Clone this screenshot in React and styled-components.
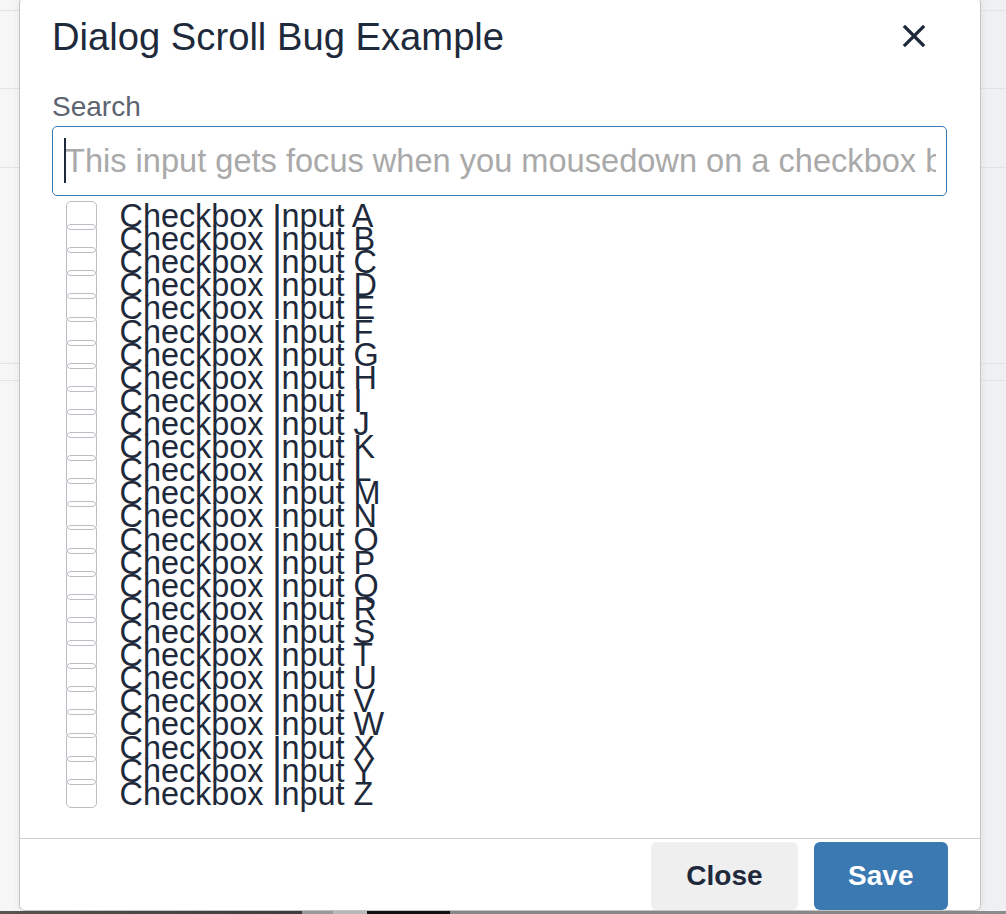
import React from 'react';
import styled, { createGlobalStyle } from 'styled-components';

const GlobalStyle = createGlobalStyle`
  html, body {
    margin: 0;
    padding: 0;
  }
  body {
    font-family: "Liberation Sans", Arial, Helvetica, sans-serif;
    background: #f1f2f4;
  }
  * {
    box-sizing: border-box;
  }
`;

const Page = styled.div`
  position: relative;
  height: 914px;
  overflow: hidden;
  display: flex;
  flex-direction: column;
  background: linear-gradient(90deg, #f6f6f7 0%, #eef0f2 100%);
`;

const BackRow = styled.div`
  height: ${props => props.h}px;
  border-bottom: 1px solid #e1e3e6;
`;

const Filler = styled.div`
  flex: 1;
`;

const BottomStrip = styled.div`
  height: 3px;
  display: flex;
`;

const StripPart = styled.div`
  width: ${props => props.w}px;
  flex: ${props => (props.w ? 'none' : '1')};
  background: ${props => props.bg};
`;

const Dialog = styled.div`
  position: absolute;
  left: 19px;
  top: -3px;
  width: 962px;
  height: 914px;
  display: flex;
  flex-direction: column;
  background: #fff;
  border: 1px solid #c4c4c4;
  border-radius: 6px;
  box-shadow: 0 0 10px rgba(0, 0, 0, 0.07);
`;

const Header = styled.div`
  display: flex;
  justify-content: space-between;
  align-items: flex-start;
  padding: 20px 54px 0 32px;
`;

const Title = styled.h1`
  margin: 0;
  font-size: 38.2px;
  line-height: 38px;
  font-weight: 400;
  color: #1e2a3b;
`;

const CloseIcon = styled.button`
  width: 24px;
  height: 24px;
  margin-top: 6px;
  padding: 0;
  border: none;
  background: transparent;
  color: #1e2a3b;
  cursor: pointer;
  display: flex;
`;

const Body = styled.div`
  flex: 1;
  padding: 0 33px 0 32px;
`;

const Label = styled.label`
  display: block;
  margin: 37px 0 5px;
  font-size: 28px;
  line-height: 28px;
  color: #5b6470;
`;

const InputWrap = styled.div`
  position: relative;
`;

const SearchInput = styled.input`
  display: block;
  width: 100%;
  height: 70px;
  padding: 0 10px 0 12px;
  border: 1.5px solid #3b79b3;
  border-radius: 5px;
  outline: none;
  font-family: inherit;
  font-size: 32.6px;
  color: #1e2a3b;
  background: #fff;

  &::placeholder {
    color: #a9a9a9;
  }
`;

const Caret = styled.span`
  position: absolute;
  left: 12px;
  top: 12px;
  width: 1.5px;
  height: 45px;
  background: #1e2a3b;
`;

const List = styled.div`
  margin-top: 5px;
  padding-left: 14px;
`;

const Row = styled.label`
  display: flex;
  align-items: flex-start;
  height: 23.12px;
  overflow: visible;
`;

const Box = styled.input`
  appearance: none;
  -webkit-appearance: none;
  flex: none;
  width: 31px;
  height: 29px;
  margin: 0;
  border: 1.5px solid #babec4;
  border-radius: 5px;
  background: transparent;
`;

const RowText = styled.span`
  margin-left: 22.5px;
  font-size: 32.4px;
  line-height: 30.4px;
  color: #1e2a3b;
  white-space: nowrap;
`;

const Footer = styled.div`
  display: flex;
  justify-content: flex-end;
  gap: 16px;
  padding: 3px 32px 0 0;
  border-top: 1.5px solid #d0d0d0;
`;

const Button = styled.button`
  height: 68px;
  padding: 0 ${props => (props.primary ? '34.5px' : '35px')};
  border: none;
  border-radius: 6px;
  font-family: inherit;
  font-size: 28px;
  font-weight: 700;
  background: ${props => (props.primary ? '#3b79b3' : '#efefef')};
  color: ${props => (props.primary ? '#ffffff' : '#1e2a3b')};
  cursor: pointer;
`;

const letters = 'ABCDEFGHIJKLMNOPQRSTUVWXYZ'.split('');

const App = () => {
  return (
    <>
      <GlobalStyle />
      <Page>
        <BackRow h={11} />
        <BackRow h={78} />
        <BackRow h={79} />
        <BackRow h={196} />
        <BackRow h={17} />
        <Filler />
        <BottomStrip>
          <StripPart w={302} bg="linear-gradient(90deg, #5b544e, #3f3e3e)" />
          <StripPart w={31} bg="#9d9d9d" />
          <StripPart w={34} bg="#bdbdbd" />
          <StripPart w={83} bg="#121212" />
          <StripPart bg="#8c8c8c" />
        </BottomStrip>

        <Dialog>
          <Header>
            <Title>Dialog Scroll Bug Example</Title>
            <CloseIcon aria-label="Close">
              <svg width="24" height="24" viewBox="0 0 24 24" fill="none">
                <path
                  d="M3 3L21 21M21 3L3 21"
                  stroke="currentColor"
                  strokeWidth="3.2"
                  strokeLinecap="square"
                />
              </svg>
            </CloseIcon>
          </Header>

          <Body>
            <Label htmlFor="search">Search</Label>
            <InputWrap>
              <SearchInput
                id="search"
                placeholder="This input gets focus when you mousedown on a checkbox below"
              />
              <Caret />
            </InputWrap>

            <List>
              {letters.map(letter => (
                <Row key={letter}>
                  <Box type="checkbox" />
                  <RowText>Checkbox Input {letter}</RowText>
                </Row>
              ))}
            </List>
          </Body>

          <Footer>
            <Button>Close</Button>
            <Button primary>Save</Button>
          </Footer>
        </Dialog>
      </Page>
    </>
  );
};

export default App;
